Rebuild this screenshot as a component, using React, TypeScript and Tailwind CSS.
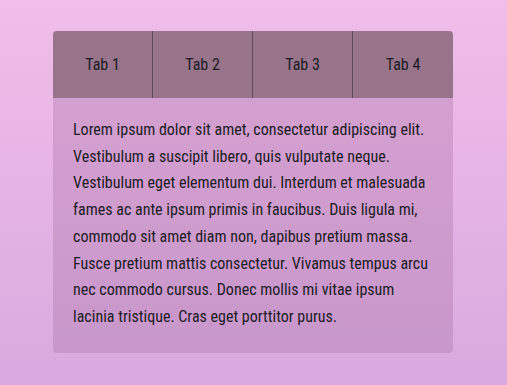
import React from "react";

export default function App() {
  const tabs = ["Tab 1", "Tab 2", "Tab 3", "Tab 4"];
  return (
    <div
      className="w-[507px] h-[385px] flex pl-[53px] pt-[31px] bg-gradient-to-b from-[#f1bde9] to-[#d9a9df]"
      style={{ fontFamily: "'Roboto Condensed', Roboto, sans-serif", fontStretch: "condensed" }}
    >
      <div className="w-[400px] h-[322px] flex flex-col rounded-[4px] overflow-hidden bg-[#a06a9a]/30">
        <div className="flex h-[67px] bg-[#977489]">
          {tabs.map((t, i) => (
            <div
              key={t}
              className={`w-[100px] flex items-center justify-center text-[16px] text-[#1c1c24] ${i < 3 ? "border-r border-[#5a4a55]" : ""}`}
            >
              {t}
            </div>
          ))}
        </div>
        <div className="flex-1 px-[20px] pt-[19px] text-[16px] leading-[26.7px] text-[#1c1c24]">
          Lorem ipsum dolor sit amet, consectetur adipiscing elit. Vestibulum a suscipit libero, quis vulputate neque. Vestibulum eget elementum dui. Interdum et malesuada fames ac ante ipsum primis in faucibus. Duis ligula mi, commodo sit amet diam non, dapibus pretium massa. Fusce pretium mattis consectetur. Vivamus tempus arcu nec commodo cursus. Donec mollis mi vitae ipsum lacinia tristique. Cras eget porttitor purus.
        </div>
      </div>
    </div>
  );
}
